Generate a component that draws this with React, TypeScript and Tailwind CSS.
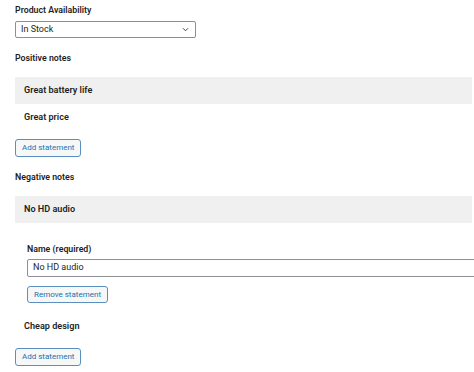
import React from "react";

function Btn({ children }: { children: React.ReactNode }) {
  return (
    <button className="h-[18px] px-[6px] rounded-[3px] border border-[#5a8fc0] bg-[#f6f7f7] text-[#2271b1] text-[8px] leading-none font-normal">
      {children}
    </button>
  );
}

export default function App() {
  return (
    <div className="w-[474px] h-[372px] overflow-hidden bg-white text-[#1e1e1e] font-['Roboto',sans-serif]">
      <div className="pl-[15px] w-[472px] flex flex-col">
        <div className="mt-[5px] h-[12px] flex items-center text-[8.8px] font-semibold">Product Availability</div>
        <div className="mt-[4px] w-[181px] h-[17px] border border-[#8c8f94] rounded-[2px] flex items-center justify-between pl-[5px] pr-[6px]">
          <span className="text-[9px]">In Stock</span>
          <svg width="7" height="5" viewBox="0 0 8 6" fill="none">
            <path d="M1 1.5 L4 4.5 L7 1.5" stroke="#3c434a" strokeWidth="1.2" />
          </svg>
        </div>
        <div className="mt-[15px] h-[12px] flex items-center text-[8.8px] font-semibold">Positive notes</div>
        <div className="mt-[12px] h-[27px] bg-[#f0f0f0] flex items-center pl-[9px] text-[9.1px] font-semibold">Great battery life</div>
        <div className="h-[27px] flex items-center pl-[9px] text-[9.1px] font-semibold">Great price</div>
        <div className="mt-[8px] flex">
          <Btn>Add statement</Btn>
        </div>
        <div className="mt-[15px] h-[12px] flex items-center text-[8.8px] font-semibold">Negative notes</div>
        <div className="mt-[12px] h-[27px] bg-[#f0f0f0] flex items-center pl-[9px] text-[9.1px] font-semibold">No HD audio</div>
        <div className="pl-[12px] flex flex-col">
          <div className="mt-[21px] h-[12px] flex items-center text-[8.8px] font-semibold">Name (required)</div>
          <div className="mt-[3px] w-[470px] h-[18px] border border-[#8c8f94] rounded-[2px] flex items-center pl-[5px] text-[9px]">No HD audio</div>
          <div className="mt-[9px] flex">
            <button className="h-[17px] px-[6px] rounded-[3px] border border-[#5a8fc0] bg-[#f6f7f7] text-[#2271b1] text-[8px] leading-none">Remove statement</button>
          </div>
        </div>
        <div className="mt-[10px] h-[27px] flex items-center pl-[9px] text-[9.1px] font-semibold">Cheap design</div>
        <div className="mt-[8px] flex">
          <Btn>Add statement</Btn>
        </div>
      </div>
    </div>
  );
}
